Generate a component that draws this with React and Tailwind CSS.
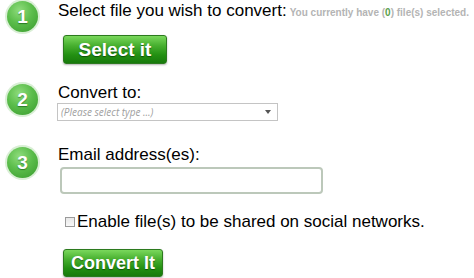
export default function App() {
  const Step = ({ n, className = '' }) => (
    <div className={`ml-[5px] w-[35px] h-[35px] shrink-0 rounded-full bg-[#d9efd5] p-[2px] ${className}`}>
      <div className="w-full h-full rounded-full bg-[radial-gradient(circle_at_40%_30%,#8fdc7c_0%,#5bbd4b_45%,#379a2c_100%)] flex items-center justify-center text-white font-bold text-[19px] leading-none [text-shadow:0_1px_1px_rgba(0,60,0,0.5)]">
        {n}
      </div>
    </div>
  )

  const GreenButton = ({ children, className = '' }) => (
    <button className={`rounded-[3px] border border-[#2c7a1e] bg-[linear-gradient(to_bottom,#7ad85c_0%,#48b030_35%,#239012_70%,#187a0c_100%)] text-white font-bold leading-none [text-shadow:0_1px_1px_rgba(0,40,0,0.6)] shadow-[0_1px_2px_rgba(0,0,0,0.3)] ${className}`}>
      {children}
    </button>
  )

  return (
    <div className="w-[474px] h-[278px] overflow-hidden bg-white font-['Liberation_Sans',Arial,sans-serif] text-black">
      {/* step 1 */}
      <div className="flex items-start">
        <Step n="1" className="mt-[-1px]" />
        <div className="ml-[18px] pt-[1px]">
          <div className="flex items-baseline leading-[19px] whitespace-nowrap">
            <span className="text-[17px]">Select file you wish to convert:</span>
            <span className="ml-[3px] text-[10px] font-bold text-[#b4b4b4]">
              You currently have (<span className="text-[#5a9e4a]">0</span>) file(s) selected.
            </span>
          </div>
          <GreenButton className="mt-[13px] ml-[5px] w-[104px] h-[29px] text-[19px]">Select it</GreenButton>
        </div>
      </div>

      {/* step 2 */}
      <div className="flex items-start mt-[18px]">
        <Step n="2" />
        <div className="ml-[18px] pt-[1px]">
          <div className="text-[17px] leading-[19px]">Convert to:</div>
          <div className="mt-[1px] ml-[-1px] w-[221px] h-[18px] border border-[#c4c4c4] bg-white flex items-center justify-between pl-[3px] pr-[6px]">
            <span className="font-['Open_Sans',sans-serif] italic text-[10px] text-[#a0a0a0]">(Please select type ...)</span>
            <span className="w-0 h-0 border-l-[3px] border-r-[3px] border-t-[4px] border-l-transparent border-r-transparent border-t-[#555]" />
          </div>
        </div>
      </div>

      {/* step 3 */}
      <div className="flex items-start mt-[24px]">
        <Step n="3" />
        <div className="ml-[18px]">
          <div className="text-[17px] leading-[19px]">Email address(es):</div>
          <input className="mt-[3px] ml-[2px] block w-[263px] h-[27px] rounded-[4px] border-2 border-[#bcc8ba] bg-white outline-none" />
        </div>
      </div>

      {/* share */}
      <label className="mt-[18px] ml-[65px] flex items-center leading-[19px] text-[17px] whitespace-nowrap">
        <span className="w-[10px] h-[10px] border border-[#9a9a9a] bg-[linear-gradient(to_bottom,#e8e8e8,#f8f8f8)] mr-[2px] mt-[1px]" />
        Enable file(s) to be shared on social networks.
      </label>

      <GreenButton className="block mt-[18px] ml-[63px] w-[100px] h-[28px] text-[18px]">Convert It</GreenButton>
    </div>
  )
}
